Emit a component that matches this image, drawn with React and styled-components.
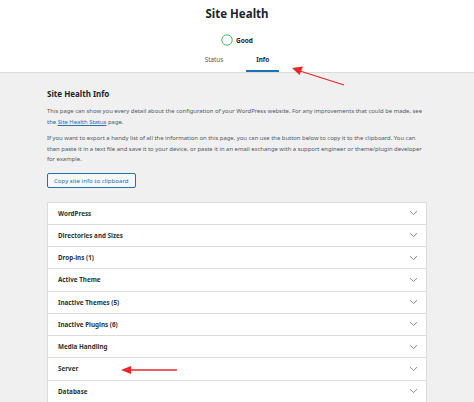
import React from "react";
import styled, { createGlobalStyle } from "styled-components";

const GlobalStyle = createGlobalStyle`
  body {
    margin: 0;
    background: #f0f0f1;
    font-family: "Noto Sans", "Open Sans", sans-serif;
    color: #1d2327;
  }
`;

const Page = styled.div`
  position: relative;
  width: 474px;
  height: 402px;
  overflow: hidden;
  background: #f0f0f1;
`;

const Header = styled.header`
  background: #fff;
  border-bottom: 1px solid #dcdcde;
  display: flex;
  flex-direction: column;
  align-items: center;
  padding-top: 6px;
`;

const Title = styled.h1`
  margin: 0;
  font-size: 11.5px;
  line-height: 16px;
  font-weight: 700;
`;

const Status = styled.div`
  display: flex;
  align-items: center;
  gap: 3px;
  margin-top: 12px;
  height: 12px;
  font-size: 6.5px;
  font-weight: 700;
`;

const Tabs = styled.nav`
  display: flex;
  gap: 13px;
  margin-top: 8px;
`;

const Tab = styled.div`
  padding: 0 10px 4px;
  font-size: 6.3px;
  line-height: 12px;
  color: ${(p) => (p.active ? "#1d2327" : "#50575e")};
  font-weight: ${(p) => (p.active ? 700 : 400)};
  border-bottom: 2px solid ${(p) => (p.active ? "#2271b1" : "transparent")};
`;

const Main = styled.main`
  padding: 15px 47px 0;
`;

const Heading = styled.h2`
  margin: 0;
  font-size: 8px;
  line-height: 12px;
  font-weight: 700;
`;

const Text = styled.p`
  margin: 6px 0 0;
  font-size: 5.9px;
  line-height: 10.5px;
  color: #50575e;

  a {
    color: #2271b1;
    text-decoration: underline;
  }
`;

const CopyButton = styled.button`
  display: block;
  margin-top: 8px;
  height: 15px;
  padding: 0 6px;
  font-family: inherit;
  font-size: 6.1px;
  color: #2271b1;
  background: #f6f7f7;
  border: 1px solid #2271b1;
  border-radius: 2px;
`;

const Accordion = styled.div`
  margin-top: 14px;
  background: #fff;
  border: 1px solid #dcdcde;
  border-bottom: none;
`;

const Row = styled.div`
  box-sizing: border-box;
  height: 22.25px;
  display: flex;
  align-items: center;
  justify-content: space-between;
  padding: 0 8px 0 10px;
  border-bottom: 1px solid #dcdcde;
  font-size: 6.3px;
  font-weight: 700;
  color: #2c3338;
`;

const Overlay = styled.svg`
  position: absolute;
  left: 0;
  top: 0;
  pointer-events: none;
`;

const sections = [
  "WordPress",
  "Directories and Sizes",
  "Drop-ins (1)",
  "Active Theme",
  "Inactive Themes (5)",
  "Inactive Plugins (6)",
  "Media Handling",
  "Server",
  "Database",
];

const Chevron = () => (
  <svg width="9" height="6" viewBox="0 0 9 6">
    <path d="M1 1.2l3.5 3.3L8 1.2" fill="none" stroke="#787c82" strokeWidth="0.9" />
  </svg>
);

export default function App() {
  return (
    <Page>
      <GlobalStyle />
      <Header>
        <Title>Site Health</Title>
        <Status>
          <svg width="12" height="12" viewBox="0 0 12 12">
            <circle cx="6" cy="6" r="5.2" fill="none" stroke="#4ab866" strokeWidth="1" />
          </svg>
          Good
        </Status>
        <Tabs>
          <Tab>Status</Tab>
          <Tab active>Info</Tab>
        </Tabs>
      </Header>
      <Main>
        <Heading>Site Health Info</Heading>
        <Text>
          This page can show you every detail about the configuration of your WordPress website. For any
          improvements that could be made, see the <a>Site Health Status</a> page.
        </Text>
        <Text>
          If you want to export a handy list of all the information on this page, you can use the button below
          to copy it to the clipboard. You can then paste it in a text file and save it to your device, or paste
          it in an email exchange with a support engineer or theme/plugin developer for example.
        </Text>
        <CopyButton>Copy site info to clipboard</CopyButton>
        <Accordion>
          {sections.map((s) => (
            <Row key={s}>
              {s}
              <Chevron />
            </Row>
          ))}
        </Accordion>
      </Main>
      <Overlay width="474" height="402">
        <g fill="#e8262b" stroke="#e8262b">
          <line x1="344" y1="85" x2="300" y2="71" strokeWidth="1.3" />
          <polygon points="292,68 303,66.5 299.5,75" stroke="none" />
          <line x1="177" y1="370" x2="130" y2="370" strokeWidth="1.3" />
          <polygon points="121,370 131,366 131,374" stroke="none" />
        </g>
      </Overlay>
    </Page>
  );
}
